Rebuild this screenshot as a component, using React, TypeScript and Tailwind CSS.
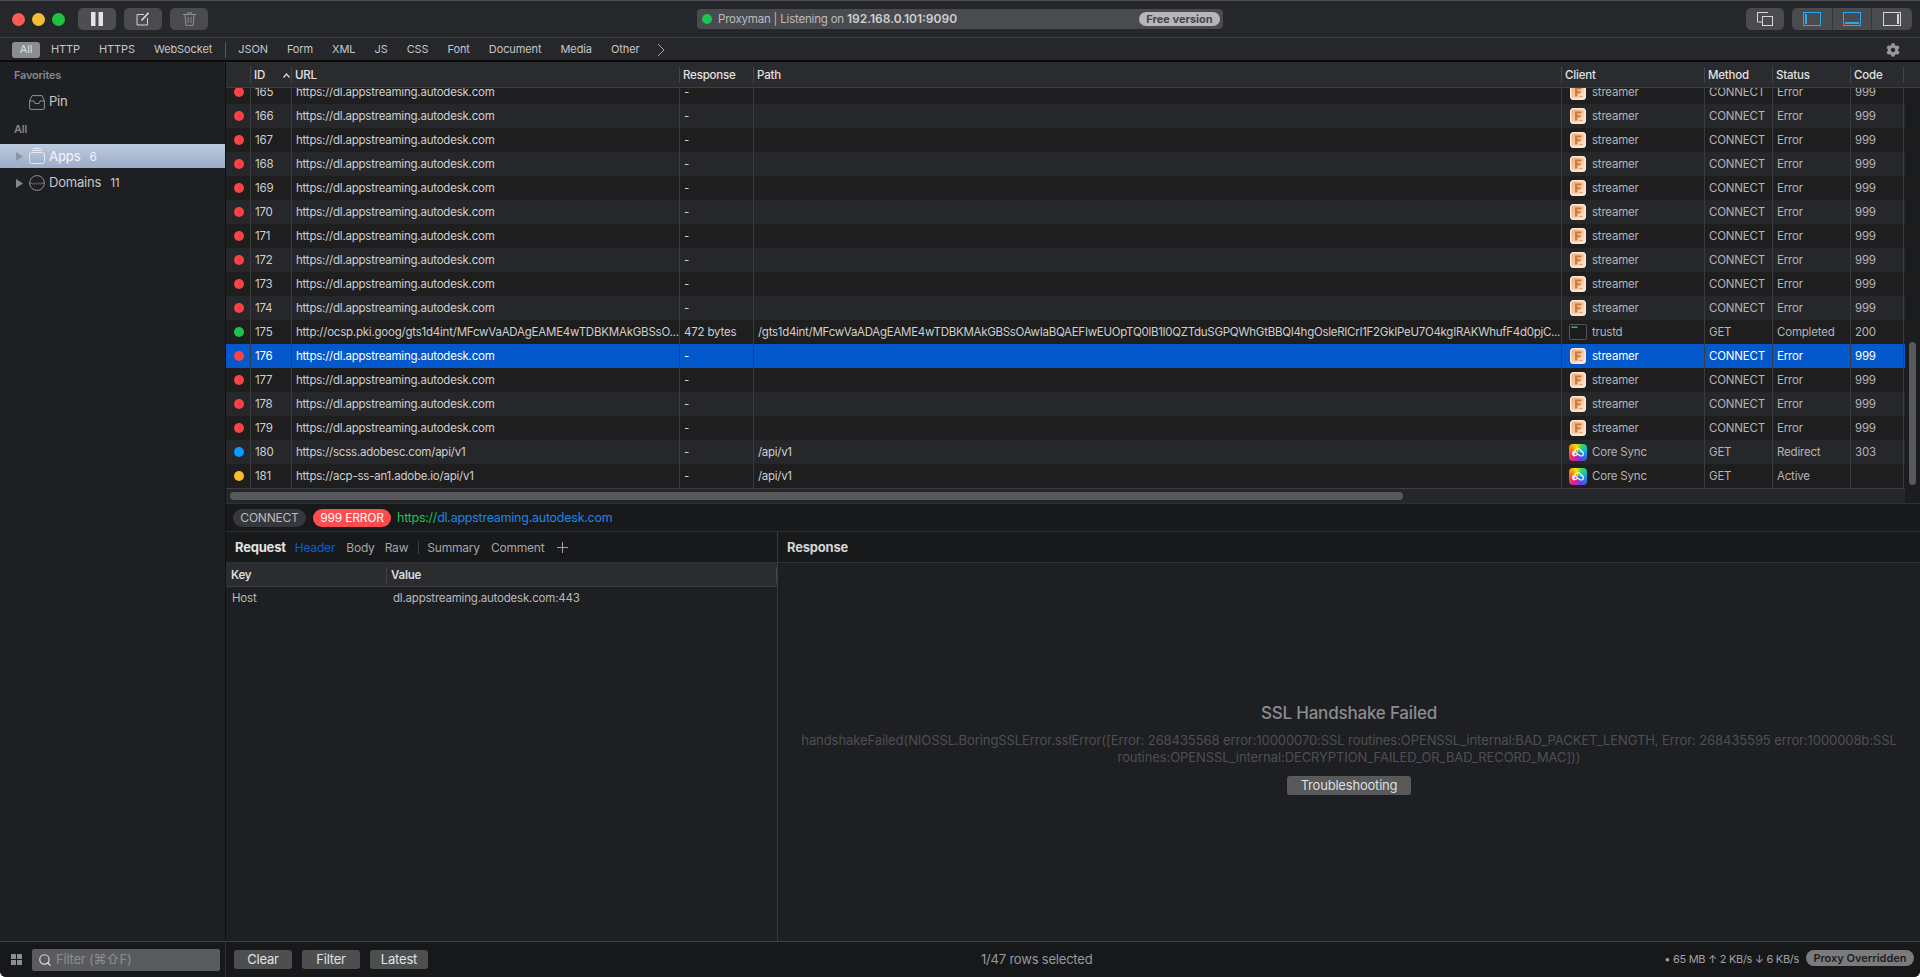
import { FaCog } from "react-icons/fa";
import { Search } from "lucide-react";

const gridCols =
  "grid grid-cols-[25px_41px_388px_74px_808px_143px_68px_78px_53px]";

type Row = {
  id: number;
  dot: string;
  url: string;
  response: string;
  path: string;
  client: string;
  method: string;
  status: string;
  code: string;
};

const streamer = (id: number): Row => ({
  id,
  dot: "bg-[#ff4245]",
  url: "https://dl.appstreaming.autodesk.com",
  response: "-",
  path: "",
  client: "streamer",
  method: "CONNECT",
  status: "Error",
  code: "999",
});

const rows: Row[] = [
  ...[165, 166, 167, 168, 169, 170, 171, 172, 173, 174].map(streamer),
  {
    id: 175,
    dot: "bg-[#19c34e]",
    url: "http://ocsp.pki.goog/gts1d4int/MFcwVaADAgEAME4wTDBKMAkGBSsO...",
    response: "472 bytes",
    path: "/gts1d4int/MFcwVaADAgEAME4wTDBKMAkGBSsOAwIaBQAEFIwEUOpTQ0lB1I0QZTduSGPQWhGtBBQI4hgOsleRICrI1F2GkIPeU7O4kgIRAKWhufF4d0pjC...",
    client: "trustd",
    method: "GET",
    status: "Completed",
    code: "200",
  },
  ...[176, 177, 178, 179].map(streamer),
  {
    id: 180,
    dot: "bg-[#0a9bff]",
    url: "https://scss.adobesc.com/api/v1",
    response: "-",
    path: "/api/v1",
    client: "Core Sync",
    method: "GET",
    status: "Redirect",
    code: "303",
  },
  {
    id: 181,
    dot: "bg-[#fdb92e]",
    url: "https://acp-ss-an1.adobe.io/api/v1",
    response: "-",
    path: "/api/v1",
    client: "Core Sync",
    method: "GET",
    status: "Active",
    code: "",
  },
];

const tabs = ["HTTP", "HTTPS", "WebSocket"];
const tabs2 = ["JSON", "Form", "XML", "JS", "CSS", "Font", "Document", "Media", "Other"];

function StreamerIcon() {
  return (
    <svg width="16" height="16" viewBox="0 0 16 16" className="shrink-0">
      <defs>
        <linearGradient id="fz" x1="0" y1="0" x2="1" y2="1">
          <stop offset="0" stopColor="#f0ad74" />
          <stop offset="1" stopColor="#fbe6d3" />
        </linearGradient>
      </defs>
      <rect width="16" height="16" rx="3.5" fill="#fce9d8" />
      <rect x="1.5" y="1.5" width="13" height="13" rx="2.5" fill="url(#fz)" />
      <path d="M5 3.500H11.500V5.500H7.500V7.300H10.800V9.200H7.500V12.500H5Z" fill="#cf7a38" />
      <rect x="9.500" y="12" width="3" height="1" fill="#e8975a" />
    </svg>
  );
}

function TerminalIcon() {
  return (
    <svg width="18" height="16" viewBox="0 0 18 16" className="shrink-0 ml-[-1px] mr-[-1px]">
      <rect x="0.5" y="0.5" width="17" height="15" rx="1.5" fill="#1b1c1d" stroke="#55565a" />
      <rect x="2.5" y="2.5" width="6" height="1.5" fill="#21c35a" />
    </svg>
  );
}

function CloudIcon() {
  return (
    <span className="w-[18px] h-[17px] shrink-0 ml-[-1px] mr-[-1px] rounded-[4px] bg-[conic-gradient(from_210deg,#e0218f,#ff3b4a,#ff8a00,#f7e21b,#3bd35a,#14b6d8,#2a6fe8,#7b35e0,#e0218f)] flex items-center justify-center">
      <svg width="12" height="9" viewBox="0 0 12 9" fill="none" stroke="#fff" strokeWidth="1.1">
        <path d="M3 8H2.8C1.4 8 .6 7 .6 5.8S1.4 3.6 2.6 3.6C3 1.8 4.4.8 6 .8c1.800 0 3 1.100 3.300 2.800C10.500 3.700 11.400 4.600 11.400 5.800S10.500 8 9.300 8C7.500 8 6.800 6.900 6 6 5.200 5 4.500 4.200 3.400 4.200 2.400 4.200 1.800 5 1.800 5.900S2.500 7.400 3.400 7.400C4.400 7.400 5 6.700 5.500 6.100" />
      </svg>
    </span>
  );
}

function ClientIcon({ client }: { client: string }) {
  if (client === "trustd") return <TerminalIcon />;
  if (client === "Core Sync") return <CloudIcon />;
  return <StreamerIcon />;
}

function Sidebar() {
  return (
    <div className="w-[226px] shrink-0 bg-[#1e1f22] border-r border-[#101113] flex flex-col">
      <p className="pl-[14px] pt-[5px] h-[26px] text-[11px] font-semibold text-[#85868a]">Favorites</p>
      <div className="flex items-center h-[28px] pl-[29px] gap-[4px] text-[13px] text-[#c8c8c8]">
        <svg width="16" height="15" viewBox="0 0 16 15" fill="none" stroke="#8f9093" strokeWidth="1">
          <path d="M3 .6H13L15.400 6V13A1.400 1.400 0 0 1 14 14.400H2A1.400 1.400 0 0 1 .6 13V6ZM.6 6H5L6 8.500H10L11 6H15.400" />
        </svg>
        <span>Pin</span>
      </div>
      <p className="pl-[14px] h-[24px] pt-[5px] text-[11px] font-semibold text-[#85868a]">All</p>
      <div className="flex items-center h-[24px] mt-[4px] bg-[linear-gradient(#bccadf,#9dacc8)] text-[#eef1f6] text-[13px]">
        <svg width="7" height="9" viewBox="0 0 7 9" className="ml-[16px]"><path d="M0 0L7 4.500L0 9Z" fill="#8c93a1" /></svg>
        <svg width="16" height="16" viewBox="0 0 16 16" fill="none" stroke="#e4e9f2" strokeWidth="1" className="ml-[6px]">
          <rect x=".5" y="4.500" width="15" height="11" rx="2" />
          <path d="M2.500 2.500H13.500M4 .5H12" />
        </svg>
        <span className="ml-[4px] pt-[1px] font-medium">Apps</span>
        <span className="ml-[9px] pt-[1px] text-[12px]">6</span>
      </div>
      <div className="flex items-center h-[30px] text-[#c8c8c8] text-[13px]">
        <svg width="7" height="9" viewBox="0 0 7 9" className="ml-[16px]"><path d="M0 0L7 4.500L0 9Z" fill="#85868a" /></svg>
        <svg width="16" height="16" viewBox="0 0 16 16" fill="none" stroke="#8f9093" strokeWidth="1" className="ml-[6px]">
          <circle cx="8" cy="8" r="7.400" />
          <path d="M1 8.200H2.500L3.500 9L4.500 8.200L5.500 9L6.500 8.200L7.500 9L8.500 8.200L9.500 9L10.500 8.200L11.500 9L12.500 8.200H15" strokeWidth=".8" />
        </svg>
        <span className="ml-[4px]">Domains</span>
        <span className="ml-[9px] text-[12px]">11</span>
      </div>
    </div>
  );
}

function Toolbar() {
  return (
    <div className="h-[38px] shrink-0 border-t border-b border-t-[#4f5054] border-b-[#3e3f43] flex items-center">
      <div className="flex gap-[7px] ml-[12px]">
        <span className="w-[13px] h-[13px] rounded-full bg-[#ff5a52]" />
        <span className="w-[13px] h-[13px] rounded-full bg-[#f5bd31]" />
        <span className="w-[13px] h-[13px] rounded-full bg-[#1fc23f]" />
      </div>
      <div className="flex gap-[8px] ml-[13px]">
        <button className="w-[38px] h-[22px] rounded-[5px] bg-[#4d4e52] flex items-center justify-center">
          <svg width="12" height="14" viewBox="0 0 12 14"><rect width="4.500" height="14" fill="#e4e4e4" /><rect x="7.500" width="4.500" height="14" fill="#e4e4e4" /></svg>
        </button>
        <button className="w-[38px] h-[22px] rounded-[5px] bg-[#4a4b4f] flex items-center justify-center">
          <svg width="14" height="14" viewBox="0 0 14 14" fill="none" stroke="#d4d4d4">
            <path d="M8 2.500H1V13H11.500V6" />
            <path d="M5.500 8.500L12.500 .8" strokeWidth="1.800" />
          </svg>
        </button>
        <button className="w-[38px] h-[22px] rounded-[5px] bg-[#4a4b4f] flex items-center justify-center">
          <svg width="13" height="14" viewBox="0 0 13 14" fill="none" stroke="#8f9093">
            <path d="M0 2.500H13M4.500 2.500V.8H8.500V2.500M2 2.500L2.800 13.400H10.200L11 2.500M5 5V11M8 5V11" />
          </svg>
        </button>
      </div>
      <div className="ml-[489px] w-[526px] h-[20px] rounded-[4px] bg-[#4a4b4f] flex items-center text-[11.5px] text-[#bdbdbd]">
        <span className="ml-[5px] w-[10px] h-[10px] rounded-full bg-[#19c850]" />
        <span className="ml-[6px]">Proxyman | Listening on <b className="text-[12px] tracking-normal font-semibold text-[#d0d0d0]">192.168.0.101:9090</b></span>
        <span className="ml-auto mr-[3px] w-[81px] h-[14px] rounded-full bg-[#b7b7b9] text-[#45464a] text-[11px] tracking-normal font-bold flex items-center justify-center">Free version</span>
      </div>
      <button className="ml-[523px] w-[38px] h-[22px] rounded-[5px] bg-[#4a4b4f] flex items-center justify-center">
        <svg width="16" height="14" viewBox="0 0 16 14" fill="none" stroke="#d8d8d8">
          <path d="M11 .5H.5V10H5" />
          <rect x="5.500" y="4.500" width="10" height="9" />
        </svg>
      </button>
      <div className="ml-[8px] w-[120px] h-[22px] rounded-[5px] bg-[#4a4b4f] flex items-center divide-x divide-[#35363a]">
        <span className="w-[41px] h-full flex items-center justify-center">
          <svg width="18" height="14" viewBox="0 0 18 14" fill="none" stroke="#2ba8f2">
            <rect x=".5" y=".5" width="17" height="13" />
            <rect x="2" y="2" width="2" height="10" fill="#2ba8f2" stroke="none" />
          </svg>
        </span>
        <span className="w-[39px] h-full flex items-center justify-center">
          <svg width="18" height="14" viewBox="0 0 18 14" fill="none" stroke="#2ba8f2">
            <rect x=".5" y=".5" width="17" height="13" />
            <rect x="2" y="10" width="14" height="2" fill="#2ba8f2" stroke="none" />
          </svg>
        </span>
        <span className="w-[40px] h-full flex items-center justify-center">
          <svg width="18" height="14" viewBox="0 0 18 14" fill="none" stroke="#d6d6d6">
            <rect x=".5" y=".5" width="17" height="13" />
            <rect x="14" y="2" width="2" height="10" fill="#d6d6d6" stroke="none" />
          </svg>
        </span>
      </div>
    </div>
  );
}

function FilterBar() {
  return (
    <div className="h-[24px] shrink-0 pt-[1px] flex items-center text-[11px] tracking-[-0.1px] text-[#c6c6c8] border-b-2 border-[#0b0b0c]">
      <span className="ml-[12px] w-[28px] h-[16px] rounded-[3px] bg-[#8c8d90] text-[#dedede] flex items-center justify-center">All</span>
      <div className="ml-[11px] flex gap-[19px]">
        {tabs.map((t) => (
          <span key={t}>{t}</span>
        ))}
      </div>
      <span className="ml-[13px] w-px h-[16px] bg-[#58595c]" />
      <div className="ml-[12px] flex gap-[19px]">
        {tabs2.map((t) => (
          <span key={t}>{t}</span>
        ))}
      </div>
      <svg width="8" height="14" viewBox="0 0 8 14" fill="none" stroke="#a6a6a8" className="ml-[17px]">
        <path d="M1 1L7 7L1 13" />
      </svg>
      <FaCog size={14} className="ml-auto mr-[20px] text-[#98989b]" />
    </div>
  );
}

function TableHeader() {
  const hd = "h-[16px] flex items-center border-r border-[#45464a] pl-[3px] pt-[2px]";
  return (
    <div className={`${gridCols} h-[26px] shrink-0 items-center bg-[#2a2b2f] border-b border-[#3d3e42] text-[11.5px] font-medium text-[#e2e2e2]`}>
      <div className={hd} />
      <div className={`${hd} justify-between pr-[1px]`}>
        <span>ID</span>
        <svg width="7" height="5" viewBox="0 0 7 5" fill="none" stroke="#d8d8d8" strokeWidth="1.300"><path d="M.5 4.500L3.500 1L6.500 4.500" /></svg>
      </div>
      <div className={hd}>URL</div>
      <div className={hd}>Response</div>
      <div className={hd}>Path</div>
      <div className={hd}>Client</div>
      <div className={hd}>Method</div>
      <div className={hd}>Status</div>
      <div className={hd}>Code</div>
    </div>
  );
}

function TableRow({ row }: { row: Row }) {
  const selected = row.id === 176;
  const bg = selected ? "bg-[#0358cb]" : row.id % 2 === 0 ? "bg-[#26272a]" : "bg-[#1e1e1f]";
  const main = selected ? "text-white" : "text-[#cfcfd0]";
  const sub = selected ? "text-white" : "text-[#b4b4b6]";
  const cell = "h-[24px] flex items-center border-r border-[#3a3b3e] pl-[4px] min-w-0 whitespace-nowrap";
  return (
    <div className={`${gridCols} h-[24px] text-[11.5px] ${bg} ${main}`}>
      <div className="h-[24px] flex items-center justify-center pl-[1px] border-r border-[#3a3b3e]">
        <span className={`w-[10px] h-[10px] rounded-full ${row.dot}`} />
      </div>
      <div className={`${cell} pt-[2px]`}>{row.id}</div>
      <div className={`${cell} pt-[2px] tracking-[-0.22px]`}>{row.url}</div>
      <div className={`${cell} pt-[2px]`}>{row.response}</div>
      <div className={`${cell} pl-[3px] pt-[2px] tracking-[-0.28px]`}>{row.path}</div>
      <div className={`${cell} pl-[8px] gap-[6px] ${sub}`}>
        <ClientIcon client={row.client} />
        <span className="pt-[2px]">{row.client}</span>
      </div>
      <div className={`${cell} pl-[3px] pt-[2px] ${sub}`}>{row.method}</div>
      <div className={`${cell} pt-[2px] ${sub}`}>{row.status}</div>
      <div className={`${cell} pt-[2px] ${sub}`}>{row.code}</div>
    </div>
  );
}

function Requests() {
  return (
    <div className="h-[441px] shrink-0 flex flex-col">
      <TableHeader />
      <div className="flex flex-1 min-h-0">
        <div className="w-[1679px] flex flex-col">
          <div className="h-[400px] shrink-0 overflow-hidden border-b border-[#3d3e42] box-content">
            <div className="mt-[-8px]">
              {rows.map((r) => (
                <TableRow key={r.id} row={r} />
              ))}
            </div>
          </div>
          <div className="flex-1 bg-[#26272a] pl-[4px] pt-[3px]">
            <div className="w-[1173px] h-[8px] rounded-full bg-[#58595d]" />
          </div>
        </div>
        <div className="flex-1 bg-[#1b1c1e] pt-[254px] px-[4px]">
          <div className="h-[143px] rounded-full bg-[#58595d]" />
        </div>
      </div>
    </div>
  );
}

function RequestPane() {
  return (
    <div className="w-[552px] shrink-0 border-r border-[#37383c] flex flex-col">
      <div className="h-[31px] shrink-0 pt-[1px] bg-[#18191b] flex items-center text-[12px] text-[#a5a5a7] border-b border-[#2f3033]">
        <span className="ml-[9px] text-[13px] font-bold text-[#e2e2e2]">Request</span>
        <span className="ml-[9px] text-[#0a5fd0]">Header</span>
        <span className="ml-[11px]">Body</span>
        <span className="ml-[10px]">Raw</span>
        <span className="ml-[10px] w-px h-[13px] bg-[#3c3d40]" />
        <span className="ml-[8px]">Summary</span>
        <span className="ml-[11px]">Comment</span>
        <svg width="11" height="11" viewBox="0 0 11 11" stroke="#a5a5a7" className="ml-[13px]"><path d="M5.500 0V11M0 5.500H11" /></svg>
      </div>
      <div className="h-[24px] shrink-0 bg-[#2a2c30] border-b border-[#3d3e42] flex items-center text-[11.5px] font-semibold text-[#dcdcdc]">
        <span className="w-[161px] h-[16px] pl-[5px] border-r border-[#45464a]">Key</span>
        <span className="flex-1 h-[16px] pl-[4px] border-r border-[#45464a]">Value</span>
      </div>
      <div className="flex h-[24px] items-center text-[11.5px] text-[#b9b9bb]">
        <span className="w-[161px] pl-[6px]">Host</span>
        <span className="pl-[6px]">dl.appstreaming.autodesk.com:443</span>
      </div>
    </div>
  );
}

function ResponsePane() {
  return (
    <div className="flex-1 flex flex-col min-w-0">
      <div className="h-[31px] shrink-0 pt-[1px] bg-[#18191b] border-b border-[#2f3033] flex items-center pl-[9px] text-[13px] font-bold text-[#d4d4d4]">
        Response
      </div>
      <div className="flex-1 flex flex-col items-center justify-center pb-[7px]">
        <p className="text-[17px] font-medium text-[#8c8c8e] leading-[22px]">SSL Handshake Failed</p>
        <p className="mt-[8px] text-[13px] tracking-[-0.08px] leading-[17px] text-[#4e4f52] text-center whitespace-nowrap">
          handshakeFailed(NIOSSL.BoringSSLError.sslError([Error: 268435568 error:10000070:SSL routines:OPENSSL_internal:BAD_PACKET_LENGTH, Error: 268435595 error:1000008b:SSL
          <br />
          routines:OPENSSL_internal:DECRYPTION_FAILED_OR_BAD_RECORD_MAC]))
        </p>
        <button className="mt-[10px] w-[124px] h-[19px] rounded-[3px] bg-[#58595b] text-[13px] text-[#dfdfdf] flex items-center justify-center">
          Troubleshooting
        </button>
      </div>
    </div>
  );
}

function Detail() {
  return (
    <div className="flex-1 min-h-0 flex flex-col bg-[#1e1f22]">
      <div className="h-[29px] shrink-0 pt-[1px] bg-[#18191b] border-t border-b border-[#2f3033] flex items-center pl-[7px] text-[12px]">
        <span className="w-[73px] h-[18px] rounded-full bg-[#36373b] text-[#bcbcbe] flex items-center justify-center">CONNECT</span>
        <span className="ml-[7px] w-[78px] h-[18px] rounded-full bg-[#ff4c4f] text-white flex items-center justify-center">999 ERROR</span>
        <span className="ml-[6px] text-[12.5px] tracking-[-0.25px] text-[#1a86e8]"><span className="text-[#1cc05a]">https://</span>dl.appstreaming.autodesk.com</span>
      </div>
      <div className="flex-1 flex min-h-0">
        <RequestPane />
        <ResponsePane />
      </div>
    </div>
  );
}

function Footer() {
  return (
    <div className="h-[36px] shrink-0 bg-[#17181a] border-t border-[#3f4043] flex items-center text-[13px]">
      <div className="w-[226px] h-full shrink-0 border-r border-[#2f3033] flex items-center">
        <svg width="11" height="11" viewBox="0 0 11 11" fill="#8c8d90" className="ml-[11px]">
          <rect width="5" height="5" /><rect x="6" width="5" height="5" /><rect y="6" width="5" height="5" /><rect x="6" y="6" width="5" height="5" />
        </svg>
        <div className="ml-[10px] w-[188px] h-[22px] rounded-[2px] bg-[#595b5f] flex items-center pl-[6px] gap-[4px] text-[#8d8e91]">
          <Search size={14} className="text-[#dedede]" />
          <span>Filter (⌘⇧F)</span>
        </div>
      </div>
      <div className="ml-[8px] flex gap-[10px] text-[#e2e2e2]">
        <button className="w-[58px] h-[19px] rounded-[3px] bg-[#4d4e50] flex items-center justify-center">Clear</button>
        <button className="w-[58px] h-[19px] rounded-[3px] bg-[#4d4e50] flex items-center justify-center">Filter</button>
        <button className="w-[58px] h-[19px] rounded-[3px] bg-[#4d4e50] flex items-center justify-center">Latest</button>
      </div>
      <span className="ml-[553px] text-[#98989a]">1/47 rows selected</span>
      <span className="ml-auto text-[11px] tracking-[-0.3px] text-[#a0a0a2]">• 65 MB ↑ 2 KB/s ↓ 6 KB/s</span>
      <span className="ml-[7px] mr-[6px] w-[108px] h-[16px] mt-[-3px] rounded-full bg-[#7b7b7d] text-[#1d1e20] text-[11px] tracking-normal font-semibold flex items-center justify-center">Proxy Overridden</span>
    </div>
  );
}

export default function App() {
  return (
    <div className="h-[977px] bg-white overflow-hidden font-['Inter',sans-serif] tracking-[-0.2px]">
      <div className="h-full bg-[#26272b] rounded-b-[6px] overflow-hidden flex flex-col">
        <Toolbar />
        <FilterBar />
        <div className="flex-1 min-h-0 flex">
          <Sidebar />
          <div className="flex-1 min-w-0 flex flex-col">
            <Requests />
            <Detail />
          </div>
        </div>
        <Footer />
      </div>
    </div>
  );
}
